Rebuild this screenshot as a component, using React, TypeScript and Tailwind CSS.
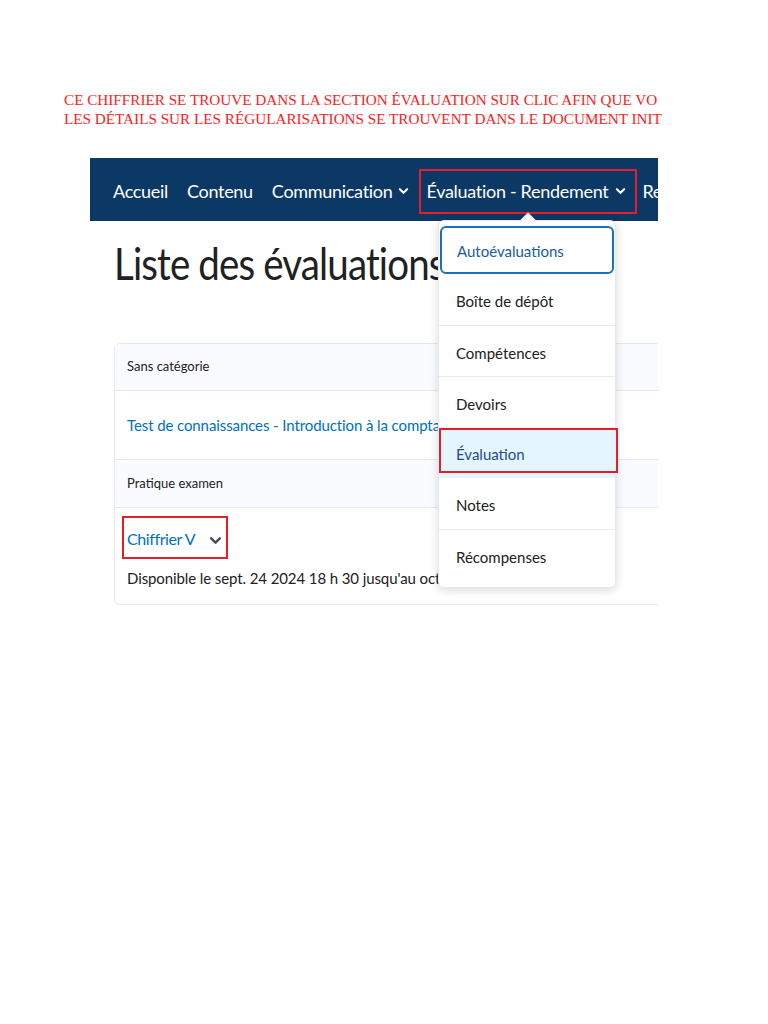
import React from "react";

const navItems = ["Accueil", "Contenu"];

const menuItems = [
  "Autoévaluations",
  "Boîte de dépôt",
  "Compétences",
  "Devoirs",
  "Évaluation",
  "Notes",
  "Récompenses",
];

function Chevron({ className }: { className?: string }) {
  return (
    <svg viewBox="0 0 12 8" className={className} fill="none" stroke="currentColor" strokeWidth="2.2" strokeLinecap="round" strokeLinejoin="round">
      <path d="M2 2l4 4 4-4" />
    </svg>
  );
}

function Menu() {
  return (
    <div className="absolute left-[348px] top-[62px] w-[178px] h-[368px] rounded-[6px] border border-[#e3e9f1] bg-white pt-[6px] shadow-[0_2px_10px_rgba(0,0,0,0.15)]">
      <div className="absolute -top-[6px] left-[83px] h-[12px] w-[12px] rotate-45 border-l border-t border-[#e3e9f1] bg-white" />
      {menuItems.map((item, i) => {
        if (i === 0) {
          return (
            <div key={item} className="relative mx-[1px] -mt-[1px] flex h-[48px] items-center rounded-[6px] border-2 border-[#1c6fc0] bg-white pl-[15px] pt-[2px] text-[15px] text-[#1b5b9e]">
              {item}
            </div>
          );
        }
        if (item === "Évaluation") {
          return (
            <div key={item} className="relative flex h-[51px] items-center bg-[#e4f5fd] pl-[17px] pt-[4px] text-[15px] text-[#1b4f8f]">
              <div className="absolute left-0 -right-[3px] top-[1px] h-[45px] border-2 border-[#e3202a]" />
              {item}
            </div>
          );
        }
        return (
          <div
            key={item}
            className={`flex h-[51px] items-center pl-[17px] pt-[4px] text-[15px] text-[#202122] ${
              i > 1 && item !== "Notes" ? "border-t border-[#e8ecf1]" : ""
            }`}
          >
            {item}
          </div>
        );
      })}
    </div>
  );
}

export default function App() {
  return (
    <div className="relative h-[1024px] w-[768px] overflow-hidden bg-white">
      <div className="w-[670px] whitespace-nowrap pl-[64px] pt-[90px] font-['Liberation_Serif',serif] text-[15.2px] leading-[19px] text-[#ff1a1a]">
        <div>CE CHIFFRIER SE TROUVE DANS LA SECTION ÉVALUATION SUR CLIC AFIN QUE VO</div>
        <div>LES DÉTAILS SUR LES RÉGULARISATIONS SE TROUVENT DANS LE DOCUMENT INIT</div>
      </div>

      <div className="relative ml-[90px] mt-[30px] h-[452px] w-[568px] overflow-hidden font-['Lato',sans-serif]">
        <nav className="flex h-[63px] items-center whitespace-nowrap bg-[#0b3865] pl-[23px] pt-[3px] text-[18px] tracking-[-0.3px] text-white">
          {navItems.map((n) => (
            <span key={n} className="mr-[19px]">
              {n}
            </span>
          ))}
          <span className="flex items-center">
            Communication
            <Chevron className="ml-[6px] h-[8px] w-[11px]" />
          </span>
          <span className="ml-[10px] flex h-[45px] items-center border-2 border-[#e3202a] pl-[5px] pr-[9px]">
            Évaluation - Rendement
            <Chevron className="ml-[7px] h-[8px] w-[11px]" />
          </span>
          <span className="ml-[5px]">Ressources</span>
        </nav>

        <div className="pl-[24px]">
          <h1 className="mt-[20px] origin-left scale-x-[0.875] whitespace-nowrap text-[44px] leading-[44px] tracking-[-1px] text-[#202122]">
            Liste des évaluations
          </h1>

          <div className="mt-[58px] w-[600px] overflow-hidden rounded-[6px] border border-[#e3e9f1]">
            <div className="flex h-[47px] items-center border-b border-[#e3e9f1] bg-[#f9fbff] pl-[12px] text-[13px] text-[#202122]">
              Sans catégorie
            </div>
            <div className="flex h-[69px] items-center whitespace-nowrap border-b border-[#e3e9f1] pl-[12px] text-[15px] tracking-[-0.1px] text-[#006fbf]">
              Test de connaissances - Introduction à la comptabilité
            </div>
            <div className="flex h-[48px] items-center border-b border-[#e3e9f1] bg-[#f9fbff] pl-[12px] text-[13px] text-[#202122]">
              Pratique examen
            </div>
            <div className="h-[96px] pl-[7px] pt-[8px]">
              <div className="flex h-[43px] w-[106px] items-center whitespace-nowrap border-2 border-[#e3202a] pl-[3px] pt-[3px] text-[16px] tracking-[-0.4px] text-[#006fbf]">
                Chiffrier V
                <Chevron className="ml-[14px] mt-[2px] h-[9px] w-[13px] text-[#494c4e]" />
              </div>
              <div className="mt-[8px] whitespace-nowrap pl-[5px] text-[15px] tracking-[-0.1px] text-[#202122]">
                Disponible le sept. 24 2024 18 h 30 jusqu'au oct. 1 2024 23 h 59
              </div>
            </div>
          </div>
        </div>

        <Menu />
      </div>
    </div>
  );
}
